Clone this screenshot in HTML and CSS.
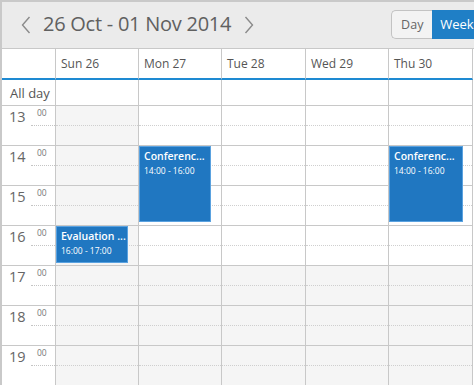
FILE: index.html
```html
<!DOCTYPE html>
<html>
<head>
<meta charset="utf-8">
<link rel="stylesheet" href="styles.css">
</head>
<body>
<div class="scheduler">
  <div class="toolbar">
    <div class="nav">
      <span class="arrow"><svg width="10" height="18" viewBox="0 0 10 18"><polyline points="8.5,1 1.5,9 8.5,17" fill="none" stroke="#8a8a8a" stroke-width="1.4"/></svg></span>
      <span class="range">26 Oct - 01 Nov 2014</span>
      <span class="arrow"><svg width="10" height="18" viewBox="0 0 10 18"><polyline points="1.5,1 8.5,9 1.5,17" fill="none" stroke="#8a8a8a" stroke-width="1.4"/></svg></span>
    </div>
    <div class="views">
      <span class="view">Day</span><span class="view active">Week</span>
    </div>
  </div>
  <div class="grid">
    <div class="hcell corner"></div>
    <div class="hcell">Sun 26</div>
    <div class="hcell">Mon 27</div>
    <div class="hcell">Tue 28</div>
    <div class="hcell">Wed 29</div>
    <div class="hcell">Thu 30</div>

    <div class="acell label">All day</div>
    <div class="acell"></div><div class="acell"></div><div class="acell"></div><div class="acell"></div><div class="acell"></div>

    <div class="tcell"><span class="hr">13</span><span class="mn">00</span></div>
    <div class="cell off"></div><div class="cell"></div><div class="cell"></div><div class="cell"></div><div class="cell"></div>

    <div class="tcell"><span class="hr">14</span><span class="mn">00</span></div>
    <div class="cell off"></div>
    <div class="cell"><div class="event ev-mon"><div class="ev-title">Conferenc...</div><div class="ev-time">14:00 - 16:00</div></div></div>
    <div class="cell"></div><div class="cell"></div>
    <div class="cell"><div class="event ev-thu"><div class="ev-title">Conferenc...</div><div class="ev-time">14:00 - 16:00</div></div></div>

    <div class="tcell"><span class="hr">15</span><span class="mn">00</span></div>
    <div class="cell off"></div><div class="cell"></div><div class="cell"></div><div class="cell"></div><div class="cell"></div>

    <div class="tcell"><span class="hr">16</span><span class="mn">00</span></div>
    <div class="cell off"><div class="event ev-sun"><div class="ev-title">Evaluation ...</div><div class="ev-time">16:00 - 17:00</div></div></div>
    <div class="cell"></div><div class="cell"></div><div class="cell"></div><div class="cell"></div>

    <div class="tcell"><span class="hr">17</span><span class="mn">00</span></div>
    <div class="cell off"></div><div class="cell off"></div><div class="cell off"></div><div class="cell off"></div><div class="cell off"></div>

    <div class="tcell"><span class="hr">18</span><span class="mn">00</span></div>
    <div class="cell off"></div><div class="cell off"></div><div class="cell off"></div><div class="cell off"></div><div class="cell off"></div>

    <div class="tcell"><span class="hr">19</span><span class="mn">00</span></div>
    <div class="cell off"></div><div class="cell off"></div><div class="cell off"></div><div class="cell off"></div><div class="cell off"></div>
  </div>
</div>
</body>
</html>
```

FILE: styles.css
```css
html, body {
  margin: 0;
  padding: 0;
  overflow: hidden;
  background: #ffffff;
}
body {
  width: 474px;
  height: 385px;
  font-family: "Open Sans", "Noto Sans", sans-serif;
  color: #555;
}
.scheduler {
  width: 474px;
  box-sizing: border-box;
  overflow: hidden;
  border-top: 2px solid #c9c9c9;
  border-left: 2px solid #c9c9c9;
  border-bottom: 2px solid #c9c9c9;
  background: #fff;
}
.toolbar {
  height: 46px;
  background: #ebebeb;
  display: flex;
  align-items: center;
  padding: 0 0 0 19px;
  box-sizing: border-box;
  overflow: hidden;
}
.nav {
  display: flex;
  align-items: center;
  flex-shrink: 0;
}
.arrow {
  display: flex;
  width: 10px;
  height: 18px;
}
.range {
  font-size: 20px;
  letter-spacing: -0.25px;
  color: #606060;
  margin: 0 13px 0 12px;
  line-height: 28px;
  position: relative;
  top: -1px;
}
.views {
  display: flex;
  margin-left: 137px;
  margin-top: -2px;
  flex-shrink: 0;
}
.view {
  height: 29px;
  box-sizing: border-box;
  display: flex;
  align-items: center;
  justify-content: center;
  font-size: 12.5px;
  border: 1px solid #c3c3c3;
  border-right: none;
  background: #f3f3f3;
  color: #666;
  flex-shrink: 0;
}
.view:first-child {
  width: 41px;
  border-radius: 5px 0 0 5px;
}
.view.active {
  width: 62px;
  background: #1f7fc6;
  border-color: #1f7fc6;
  color: #fff;
  justify-content: flex-start;
  padding-left: 7px;
  font-size: 13px;
}
.grid {
  display: grid;
  grid-template-columns: 54px 83px 83px 84px 83px 84px;
  border-top: 1px solid #c8c8c8;
}
.hcell {
  height: 31px;
  box-sizing: border-box;
  border-right: 1px solid #c8c8c8;
  border-bottom: 2px solid #1e8ad2;
  font-size: 12px;
  color: #555;
  padding-left: 5px;
  display: flex;
  align-items: center;
}
.acell {
  height: 26px;
  box-sizing: border-box;
  border-right: 1px solid #c8c8c8;
  border-bottom: 1px solid #c8c8c8;
}
.acell.label {
  font-size: 13px;
  color: #555;
  padding-left: 8px;
  display: flex;
  align-items: center;
}
.tcell {
  height: 40px;
  box-sizing: border-box;
  border-right: 1px solid #c8c8c8;
  border-bottom: 1px solid #c8c8c8;
  position: relative;
  display: flex;
  align-items: flex-start;
}
.tcell::after {
  content: "";
  position: absolute;
  left: 29px;
  right: 0;
  top: 19px;
  border-bottom: 1px dotted #c4c4c4;
}
.hr {
  font-size: 14.5px;
  color: #666;
  margin-left: 7px;
  line-height: 18px;
  margin-top: 2px;
  width: 28px;
}
.mn {
  font-size: 8.5px;
  color: #777;
  line-height: 10px;
  margin-top: 2px;
}
.cell {
  height: 40px;
  box-sizing: border-box;
  border-right: 1px solid #c8c8c8;
  border-bottom: 1px solid #c8c8c8;
  position: relative;
}
.cell::after {
  content: "";
  position: absolute;
  left: 0;
  right: 0;
  top: 19px;
  border-bottom: 1px dotted #cfcfcf;
}
.cell.off {
  background: #f5f5f5;
}
.event {
  position: absolute;
  z-index: 2;
  left: 0;
  top: 0;
  box-sizing: border-box;
  background: #2077c1;
  border: 1px solid #5aa2e0;
  color: #fff;
  padding: 2px 0 0 4px;
  overflow: hidden;
  white-space: nowrap;
}
.ev-mon {
  width: 72px;
  height: 76px;
}
.ev-thu {
  width: 74px;
  height: 76px;
}
.ev-sun {
  width: 72px;
  height: 37px;
}
.ev-title {
  font-size: 10.5px;
  font-weight: 600;
  line-height: 15px;
}
.ev-time {
  font-size: 8.5px;
  line-height: 12px;
  margin-top: 1px;
}
```
